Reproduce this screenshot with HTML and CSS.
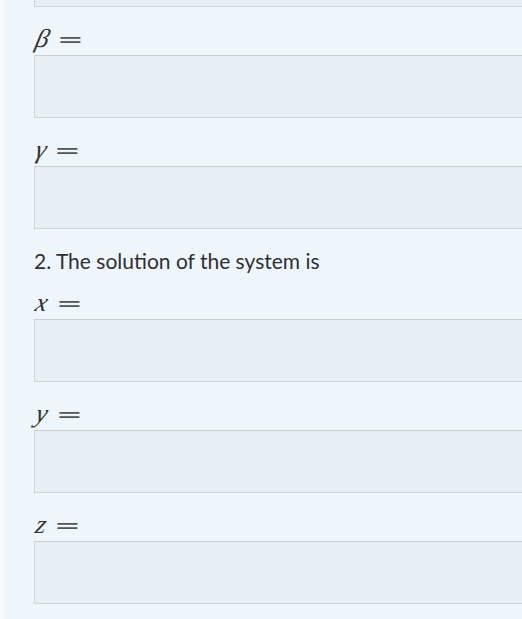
FILE: index.html
```html
<!DOCTYPE html>
<html>
<head>
<meta charset="utf-8">
<link rel="stylesheet" href="styles.css">
</head>
<body>
<div class="page">
  <div class="panel">
    <div class="box box--cut"></div>
    <div class="label"><span class="var">β</span><span class="eq">=</span></div>
    <div class="box"></div>
    <div class="label"><span class="var">γ</span><span class="eq">=</span></div>
    <div class="box"></div>
    <p class="heading">2. The solution of the system is</p>
    <div class="label label--first"><span class="var">x</span><span class="eq">=</span></div>
    <div class="box"></div>
    <div class="label"><span class="var">y</span><span class="eq">=</span></div>
    <div class="box"></div>
    <div class="label"><span class="var">z</span><span class="eq">=</span></div>
    <div class="box"></div>
  </div>
</div>
</body>
</html>
```
FILE: styles.css
```css
html, body {
  margin: 0;
  padding: 0;
  height: 100%;
  overflow: hidden;
  background: #f6f8fa;
}
.page {
  display: flex;
  height: 100%;
}
.panel {
  margin-left: 6px;
  flex: 1;
  background: #eef5fb;
  padding-left: 28px;
  box-shadow: -1px 0 2px rgba(0,0,0,0.03);
}
.box {
  height: 61px;
  background: #e8eff2;
  border: 1px solid #cdd5d8;
  border-right: 0;
  border-top-color: #c6cfd2;
}
.box--cut {
  height: 6px;
  border-top: 0;
}
.label {
  padding-top: 20px;
  height: 24px;
  margin-bottom: 4px;
  display: flex;
  align-items: center;
  color: #333;
}
.label--first {
  padding-top: 18px;
}
.var {
  display: inline-block;
  font-family: "Liberation Serif", serif;
  font-size: 26px;
  font-style: italic;
  transform: skewX(-13deg);
  margin-left: 2px;
}
.eq {
  display: inline-block;
  margin-left: 8px;
  font-family: "DejaVu Sans", sans-serif;
  font-size: 22px;
  color: #555;
  transform: scaleX(1.45);
  transform-origin: left center;
}
.heading {
  margin: 20px 0 0;
  height: 24px;
  line-height: 24px;
  font-family: Lato, "Liberation Sans", sans-serif;
  font-size: 21px;
  color: #2d3033;
}
```
